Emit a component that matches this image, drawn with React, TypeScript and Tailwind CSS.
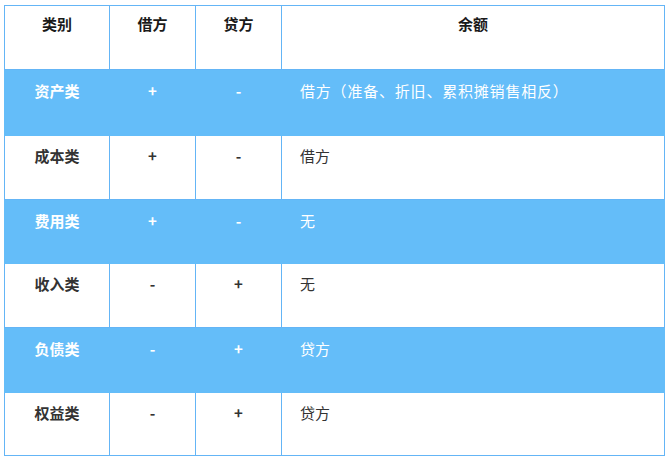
import React from "react";

type Row = { name: string; debit: string; credit: string; balance: string; blue: boolean; h: string; wide?: boolean };

const rows: Row[] = [
  { name: "资产类", debit: "+", credit: "-", balance: "借方（准备、折旧、累积摊销售相反）", blue: true, h: "h-[66px]", wide: true },
  { name: "成本类", debit: "+", credit: "-", balance: "借方", blue: false, h: "h-[64px]" },
  { name: "费用类", debit: "+", credit: "-", balance: "无", blue: true, h: "h-[64px]" },
  { name: "收入类", debit: "-", credit: "+", balance: "无", blue: false, h: "h-[64px]" },
  { name: "负债类", debit: "-", credit: "+", balance: "贷方", blue: true, h: "h-[65px]" },
  { name: "权益类", debit: "-", credit: "+", balance: "贷方", blue: false, h: "h-[63px]" },
];

export default function App() {
  return (
    <div
      className="w-[669px] h-[459px] bg-white pl-[4px] pt-[5px]"
      style={{ fontFamily: '"Microsoft YaHei", "Noto Sans CJK SC", "Noto Sans", sans-serif' }}
    >
      <table className="w-[661px] border-collapse table-fixed text-[15px] leading-[20px]">
        <colgroup>
          <col className="w-[105px]" />
          <col className="w-[86px]" />
          <col className="w-[86px]" />
          <col />
        </colgroup>
        <thead>
          <tr className="h-[64px] bg-white text-[#1a1a1a]">
            <th className="border border-[#64b5f6] align-top pt-[8px] font-bold text-center">类别</th>
            <th className="border border-[#64b5f6] align-top pt-[8px] font-bold text-center">借方</th>
            <th className="border border-[#64b5f6] align-top pt-[8px] font-bold text-center">贷方</th>
            <th className="border border-[#64b5f6] align-top pt-[8px] font-bold text-center">余额</th>
          </tr>
        </thead>
        <tbody>
          {rows.map((r) => (
            <tr
              key={r.name}
              className={r.blue ? `${r.h} bg-[#64bdf9] text-white` : `${r.h} bg-white text-[#333]`}
            >
              <td className={r.blue ? "border border-[#64bdf9] align-top pt-[11px] font-bold text-center" : "border border-[#64b5f6] align-top pt-[10px] font-bold text-center"}>
                {r.name}
              </td>
              <td className={r.blue ? "border border-[#64bdf9] align-top pt-[11px] font-bold text-center" : "border border-[#64b5f6] align-top pt-[10px] font-bold text-center"}>
                {r.debit}
              </td>
              <td className={r.blue ? "border border-[#64bdf9] align-top pt-[11px] font-bold text-center" : "border border-[#64b5f6] align-top pt-[10px] font-bold text-center"}>
                {r.credit}
              </td>
              <td className={r.blue ? "border border-[#64bdf9] align-top pt-[11px] pl-[18px] text-left" : "border border-[#64b5f6] align-top pt-[10px] pl-[18px] text-left"}>
                <span className={r.wide ? "tracking-[0.8px]" : ""}>{r.balance}</span>
              </td>
            </tr>
          ))}
        </tbody>
      </table>
    </div>
  );
}
